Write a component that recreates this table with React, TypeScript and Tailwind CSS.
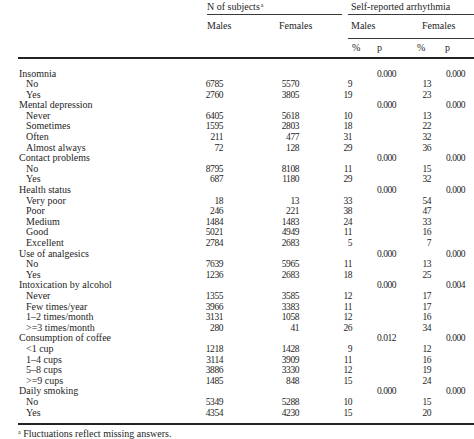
import React from "react";

type Row = { label: string; sub?: boolean; nm?: string; nf?: string; pm?: string; ppm?: string; pf?: string; ppf?: string };

const rows: Row[] = [
  { label: "Insomnia", ppm: "0.000", ppf: "0.000" },
  { label: "No", sub: true, nm: "6785", nf: "5570", pm: "9", pf: "13" },
  { label: "Yes", sub: true, nm: "2760", nf: "3805", pm: "19", pf: "23" },
  { label: "Mental depression", ppm: "0.000", ppf: "0.000" },
  { label: "Never", sub: true, nm: "6405", nf: "5618", pm: "10", pf: "13" },
  { label: "Sometimes", sub: true, nm: "1595", nf: "2803", pm: "18", pf: "22" },
  { label: "Often", sub: true, nm: "211", nf: "477", pm: "31", pf: "32" },
  { label: "Almost always", sub: true, nm: "72", nf: "128", pm: "29", pf: "36" },
  { label: "Contact problems", ppm: "0.000", ppf: "0.000" },
  { label: "No", sub: true, nm: "8795", nf: "8108", pm: "11", pf: "15" },
  { label: "Yes", sub: true, nm: "687", nf: "1180", pm: "29", pf: "32" },
  { label: "Health status", ppm: "0.000", ppf: "0.000" },
  { label: "Very poor", sub: true, nm: "18", nf: "13", pm: "33", pf: "54" },
  { label: "Poor", sub: true, nm: "246", nf: "221", pm: "38", pf: "47" },
  { label: "Medium", sub: true, nm: "1484", nf: "1483", pm: "24", pf: "33" },
  { label: "Good", sub: true, nm: "5021", nf: "4949", pm: "11", pf: "16" },
  { label: "Excellent", sub: true, nm: "2784", nf: "2683", pm: "5", pf: "7" },
  { label: "Use of analgesics", ppm: "0.000", ppf: "0.000" },
  { label: "No", sub: true, nm: "7639", nf: "5965", pm: "11", pf: "13" },
  { label: "Yes", sub: true, nm: "1236", nf: "2683", pm: "18", pf: "25" },
  { label: "Intoxication by alcohol", ppm: "0.000", ppf: "0.004" },
  { label: "Never", sub: true, nm: "1355", nf: "3585", pm: "12", pf: "17" },
  { label: "Few times/year", sub: true, nm: "3966", nf: "3383", pm: "11", pf: "17" },
  { label: "1–2 times/month", sub: true, nm: "3131", nf: "1058", pm: "12", pf: "16" },
  { label: ">=3 times/month", sub: true, nm: "280", nf: "41", pm: "26", pf: "34" },
  { label: "Consumption of coffee", ppm: "0.012", ppf: "0.000" },
  { label: "<1 cup", sub: true, nm: "1218", nf: "1428", pm: "9", pf: "12" },
  { label: "1–4 cups", sub: true, nm: "3114", nf: "3909", pm: "11", pf: "16" },
  { label: "5–8 cups", sub: true, nm: "3886", nf: "3330", pm: "12", pf: "19" },
  { label: ">=9 cups", sub: true, nm: "1485", nf: "848", pm: "15", pf: "24" },
  { label: "Daily smoking", ppm: "0.000", ppf: "0.000" },
  { label: "No", sub: true, nm: "5349", nf: "5288", pm: "10", pf: "15" },
  { label: "Yes", sub: true, nm: "4354", nf: "4230", pm: "15", pf: "20" },
];

const num = "text-[9.5px] tracking-[-0.45px] whitespace-nowrap";

export default function App() {
  return (
    <div
      className="w-[474px] h-[439px] bg-white text-[#1e1e1e] text-[10px] leading-[11px] overflow-hidden"
      style={{ fontFamily: '"Liberation Serif", "Times New Roman", serif' }}
    >
      {/* header row 1 */}
      <div className="grid grid-cols-[207px_144px_1fr] h-[12px] pt-[1px]">
        <div />
        <div className="whitespace-nowrap">
          N of subjects<span className="text-[6px] relative -top-[3px] ml-px">a</span>
        </div>
        <div className="whitespace-nowrap">Self-reported arrhythmia</div>
      </div>
      <div className="flex mt-[2px] h-px">
        <div className="ml-[207px] w-[135px] bg-[#3a3a3a]" />
        <div className="ml-[6px] flex-1 bg-[#3a3a3a]" />
      </div>
      {/* header row 2 */}
      <div className="grid grid-cols-[207px_72px_72px_71px_1fr] mt-[5px] h-[11px]">
        <div />
        <div>Males</div>
        <div>Females</div>
        <div>Males</div>
        <div>Females</div>
      </div>
      <div className="flex mt-[7px] h-px">
        <div className="ml-[348px] flex-1 bg-[#3a3a3a]" />
      </div>
      {/* header row 3 */}
      <div className="grid grid-cols-[352px_25px_40px_28px_1fr] mt-[3px] h-[11px]">
        <div />
        <div>%</div>
        <div>p</div>
        <div>%</div>
        <div>p</div>
      </div>
      <div className="flex mt-[4px] h-[1.5px]">
        <div className="ml-[18px] flex-1 bg-[#222]" />
      </div>
      {/* body */}
      <div className="mt-[10px] flex flex-col">
        {rows.map((r, i) => (
          <div
            key={i}
            className="grid grid-cols-[190px_33px_76px_53px_48px_31px_1fr] h-[10.6px] leading-[10.6px]"
          >
            <div className={`whitespace-nowrap ${r.sub ? "pl-[26px]" : "pl-[19px]"}`}>{r.label}</div>
            <div className={`text-right ${num}`}>{r.nm ?? ""}</div>
            <div className={`text-right ${num}`}>{r.nf ?? ""}</div>
            <div className={`text-right ${num}`}>{r.pm ?? ""}</div>
            <div className={`pl-[25px] ${num}`}>{r.ppm ?? ""}</div>
            <div className={`text-right ${num}`}>{r.pf ?? ""}</div>
            <div className={`pl-[15px] ${num}`}>{r.ppf ?? ""}</div>
          </div>
        ))}
      </div>
      <div className="flex mt-[5px] h-[1.5px]">
        <div className="ml-[18px] flex-1 bg-[#222]" />
      </div>
      <div className="mt-[3px] pl-[18px] whitespace-nowrap h-[11px]">
        <span className="text-[6px] relative -top-[3px]">a</span> Fluctuations reflect missing answers.
      </div>
    </div>
  );
}
